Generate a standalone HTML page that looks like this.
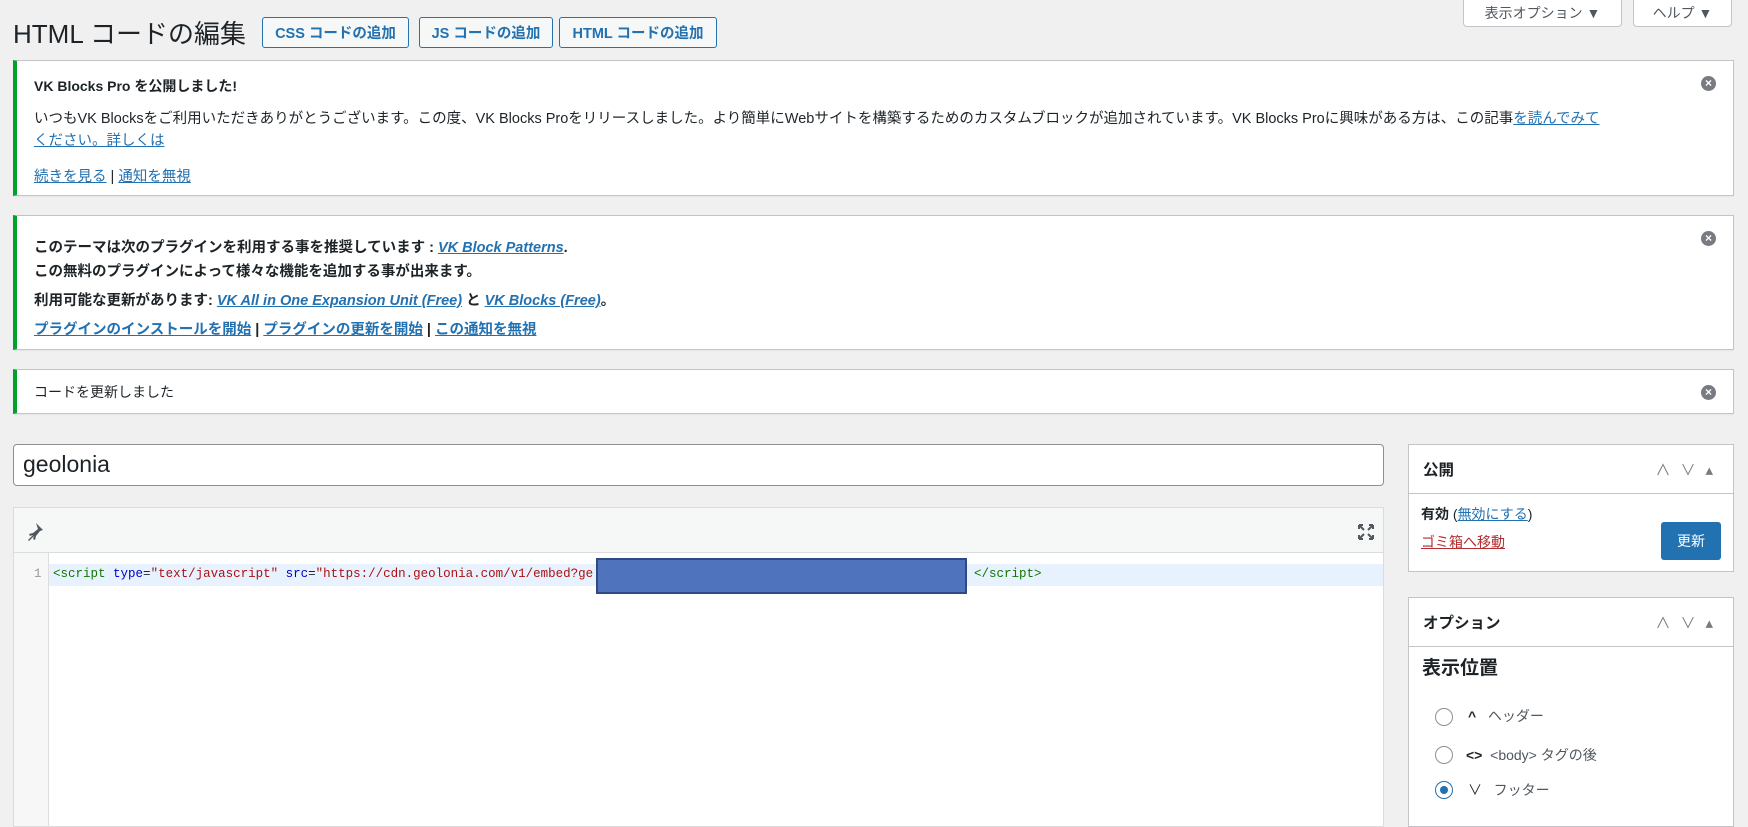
<!DOCTYPE html>
<html><head><meta charset="utf-8"><style>
*{box-sizing:border-box;margin:0;padding:0}
body{width:1748px;height:808px;overflow:hidden;background:#f0f0f1;font-family:"Liberation Sans","Noto Sans CJK JP",sans-serif;color:#1d2327;font-size:14.5px;position:relative}
.a{position:absolute}
a{color:#2271b1;text-decoration:underline}
.btn{position:absolute;border:1px solid #2271b1;color:#2271b1;background:#f6f7f7;border-radius:3px;font-size:14.5px;font-weight:bold;display:flex;align-items:center;justify-content:center}
.tab{position:absolute;background:#fff;border:1px solid #c3c4c7;border-top:none;border-radius:0 0 4px 4px;color:#50575e;font-size:14px;display:flex;align-items:center;justify-content:center}
.notice{position:absolute;left:13px;width:1721px;background:#fff;border:1px solid #c3c4c7;border-left:4px solid #00a32a;box-shadow:0 1px 1px rgba(0,0,0,.04)}
.x{position:absolute;right:17px;width:15px;height:15px;border-radius:50%;background:#787c82;color:#fff;font-size:12px;line-height:15px;text-align:center;font-weight:bold}
.box{position:absolute;left:1408px;width:326px;background:#fff;border:1px solid #c3c4c7}
.hd{height:49px;border-bottom:1px solid #c3c4c7;font-weight:bold;font-size:15.5px;padding-left:14px;display:flex;align-items:center;position:relative}
.ar{position:absolute;right:10px;top:14px;color:#787c82;font-size:15px;letter-spacing:10px;font-weight:normal}
.radio{position:absolute;left:1435px;width:18px;height:18px;border:1px solid #8c8f94;border-radius:50%;background:#fff}
</style></head><body>
<div class="a" style="left:13px;top:14px;font-size:26px;color:#1d2327">HTML コードの編集</div>
<div class="btn" style="left:262px;top:17px;width:147px;height:31px">CSS コードの追加</div>
<div class="btn" style="left:419px;top:17px;width:134px;height:31px">JS コードの追加</div>
<div class="btn" style="left:559px;top:17px;width:158px;height:31px">HTML コードの追加</div>
<div class="tab" style="left:1463px;top:0;width:159px;height:27px">表示オプション ▼</div>
<div class="tab" style="left:1633px;top:0;width:99px;height:27px">ヘルプ ▼</div>

<div class="notice" style="top:60px;height:136px">
<div class="x" style="top:15px">×</div>
<div class="a" style="left:17px;top:15px;font-weight:bold;font-size:14px">VK Blocks Pro を公開しました!</div>
<div class="a" style="left:17px;top:47px;line-height:22px;font-size:14.5px;white-space:nowrap">いつもVK Blocksをご利用いただきありがとうございます。この度、VK Blocks Proをリリースしました。より簡単にWebサイトを構築するためのカスタムブロックが追加されています。VK Blocks Proに興味がある方は、この記事<a>を読んでみて</a><br><a>ください。詳しくは</a></div>
<div class="a" style="left:17px;top:104px"><a>続きを見る</a> | <a>通知を無視</a></div>
</div>

<div class="notice" style="top:215px;height:135px">
<div class="x" style="top:15px">×</div>
<div class="a" style="left:17px;top:20px;font-weight:bold;line-height:24px">このテーマは次のプラグインを利用する事を推奨しています : <a style="font-style:italic">VK Block Patterns</a>.<br>この無料のプラグインによって様々な機能を追加する事が出来ます。</div>
<div class="a" style="left:17px;top:73px;font-weight:bold">利用可能な更新があります: <a style="font-style:italic">VK All in One Expansion Unit (Free)</a> と <a style="font-style:italic">VK Blocks (Free)</a>。</div>
<div class="a" style="left:17px;top:102px;font-weight:bold"><a>プラグインのインストールを開始</a> | <a>プラグインの更新を開始</a> | <a>この通知を無視</a></div>
</div>

<div class="notice" style="top:369px;height:45px">
<div class="x" style="top:15px">×</div>
<div class="a" style="left:17px;top:12px;font-size:14px">コードを更新しました</div>
</div>

<div class="a" style="left:13px;top:444px;width:1371px;height:42px;background:#fff;border:1px solid #8c8f94;border-radius:4px;font-size:23px;padding:6px 9px">geolonia</div>

<div class="a" style="left:13px;top:507px;width:1371px;height:320px;background:#fff;border:1px solid #dcdcde;overflow:hidden">
<div class="a" style="left:0;top:0;width:100%;height:45px;background:#f6f7f7;border-bottom:1px solid #dcdcde">
<svg class="a" style="left:12px;top:14px" width="20" height="20" viewBox="0 0 20 20"><path d="M10 1l7 7-3 1-4 5-1 4-2-1 1-3-5 5-1-1 5-5-3 1-1-2 4-1 5-4z" fill="#50575e"/></svg>
<svg class="a" style="left:1343px;top:15px" width="18" height="18" viewBox="0 0 18 18" fill="none" stroke="#50575e" stroke-width="2"><path d="M2 2l5 5M16 2l-5 5M2 16l5-5M16 16l-5-5M2 2h4M2 2v4M16 2h-4M16 2v4M2 16h4M2 16v-4M16 16h-4M16 16v-4"/></svg>
</div>
<div class="a" style="left:0;top:45px;width:35px;height:300px;background:#f7f7f7;border-right:1px solid #ddd"></div>
<div class="a" style="left:35px;top:56px;width:1335px;height:22px;background:#e8f2ff"></div>
<div class="a" style="left:20px;top:59px;font-family:'Liberation Mono',monospace;font-size:12.5px;color:#999">1</div>
<div class="a" style="left:39px;top:59px;font-family:'Liberation Mono',monospace;font-size:12.5px;white-space:nowrap"><span style="color:#170">&lt;script</span> <span style="color:#00c">type</span>=<span style="color:#a11">"text/javascript"</span> <span style="color:#00c">src</span>=<span style="color:#a11">"https://cdn.geolonia.com/v1/embed?ge</span></div>
<div class="a" style="left:960px;top:59px;font-family:'Liberation Mono',monospace;font-size:12.5px;color:#170">&lt;/script&gt;</div>
<div class="a" style="left:582px;top:50px;width:371px;height:36px;background:#4f73bd;border:2px solid #2f4a80"></div>
</div>

<div class="box" style="top:444px;height:128px">
<div class="hd">公開<span class="ar">∧∨▴</span></div>
<div class="a" style="left:12px;top:59px;font-size:14px;font-weight:bold">有効 <span style="font-weight:normal">(<a>無効にする</a>)</span></div>
<div class="a" style="left:12px;top:87px;font-size:14px"><a style="color:#b32d2e">ゴミ箱へ移動</a></div>
<div class="a" style="left:252px;top:77px;width:60px;height:38px;background:#2271b1;border-radius:3px;color:#fff;font-size:14px;display:flex;align-items:center;justify-content:center">更新</div>
</div>

<div class="box" style="top:597px;height:230px">
<div class="hd">オプション<span class="ar">∧∨▴</span></div>
<div class="a" style="left:13px;top:55px;font-size:19px;font-weight:bold">表示位置</div>
</div>
<div class="radio" style="top:708px"></div>
<div class="a" style="left:1468px;top:706px;font-size:14px;color:#50575e"><b style="color:#1d2327">^</b>&nbsp;&nbsp; ヘッダー</div>
<div class="radio" style="top:746px"></div>
<div class="a" style="left:1466px;top:745px;font-size:14px;color:#50575e"><b style="color:#1d2327">&lt;&gt;</b>&nbsp; &lt;body&gt; タグの後</div>
<div class="radio" style="top:781px;border-color:#2271b1"><div style="width:8px;height:8px;border-radius:50%;background:#2271b1;margin:4px"></div></div>
<div class="a" style="left:1468px;top:780px;font-size:14px;color:#50575e"><span style="color:#1d2327">∨</span>&nbsp;&nbsp; フッター</div>
</body></html>
